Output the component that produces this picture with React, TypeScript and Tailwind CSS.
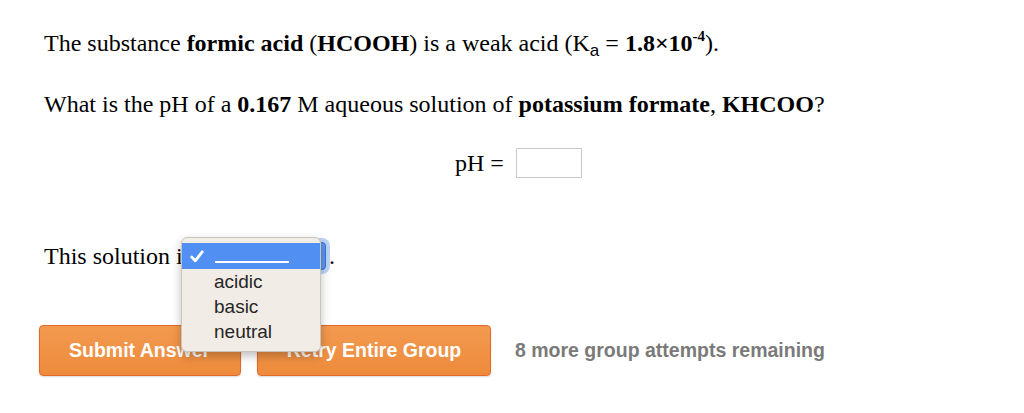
import React from "react"

const serif = { fontFamily: '"Liberation Serif", "Times New Roman", serif' }
const sans = { fontFamily: '"Liberation Sans", Arial, Helvetica, sans-serif' }

const OPTIONS = ["acidic", "basic", "neutral"]

function Check() {
  return (
    <svg width="14" height="13" viewBox="0 0 12 11" className="block">
      <path d="M1.5 6 L4.5 9.2 L10.5 1.5" fill="none" stroke="white" strokeWidth="2.4" strokeLinecap="round" strokeLinejoin="round" />
    </svg>
  )
}

export default function App() {
  return (
    <div className="relative h-[413px] w-[1024px] overflow-hidden bg-white pl-[44px] text-[24px] leading-none text-black" style={serif}>
      <div className="mt-[29px] flex h-[28px] items-center whitespace-nowrap">
        <span>
          The substance <b>formic acid</b> (<b>HCOOH</b>) is a weak acid (K
          <sub className="relative top-[5px] text-[17px] font-normal" style={sans}>a</sub> = <b>1.8×10<sup className="relative top-[-10px] text-[15px]">-4</sup></b>).
        </span>
      </div>

      <div className="mt-[33px] flex h-[28px] items-center whitespace-nowrap">
        <span>
          What is the pH of a <b>0.167</b> M aqueous solution of <b>potassium formate</b>, <b>KHCOO</b>?
        </span>
      </div>

      <div className="ml-[411px] mt-[30px] flex h-[30px] items-center gap-[12px]">
        <span>pH =</span>
        <span className="h-[30px] w-[66px] border border-[#c9c9c9] bg-white" />
      </div>

      <div className="relative mt-[64px] flex h-[28px] items-center whitespace-nowrap">
        <span>This solution is&nbsp;</span>
        <span className="h-[28px] w-[128px] rounded-[4px] border border-[#3b73d6] bg-[#5b95ef] ring-4 ring-[#9ec0f2]/70" />
        <span className="ml-[3px]">.</span>

        {/* open select menu */}
        <div
          className="absolute left-[137px] top-[-5px] z-10 w-[140px] rounded-[6px] border border-[#c9c6c0] bg-[#f1ede6] pb-[7px] pt-[5px] shadow-[0_4px_10px_rgba(0,0,0,0.25)]"
          style={sans}
        >
          <div className="flex h-[26px] items-center bg-[#5190f2] pl-[8px]">
            <Check />
            <span className="ml-[11px] mt-[12px] h-[2px] w-[74px] bg-white" />
          </div>
          {OPTIONS.map((o) => (
            <div key={o} className="flex h-[25px] items-center pl-[32px] text-[19px] text-[#262626]">
              {o}
            </div>
          ))}
        </div>
      </div>

      <div className="ml-[-5px] mt-[55px] flex items-center gap-[16px]" style={sans}>
        <button className="h-[51px] w-[202px] rounded-[4px] border border-[#e06a27] bg-gradient-to-b from-[#f29a4f] to-[#ee8a3b] pl-[29px] text-left text-[19.5px] font-bold text-white shadow-[0_1px_2px_rgba(0,0,0,0.15)]">
          Submit Answer
        </button>
        <button className="h-[51px] w-[234px] rounded-[4px] border border-[#e06a27] bg-gradient-to-b from-[#f29a4f] to-[#ee8a3b] text-[19.5px] font-bold text-white shadow-[0_1px_2px_rgba(0,0,0,0.15)]">
          Retry Entire Group
        </button>
        <span className="ml-[8px] text-[19.5px] font-bold text-[#7a7a7a]">8 more group attempts remaining</span>
      </div>
    </div>
  )
}
